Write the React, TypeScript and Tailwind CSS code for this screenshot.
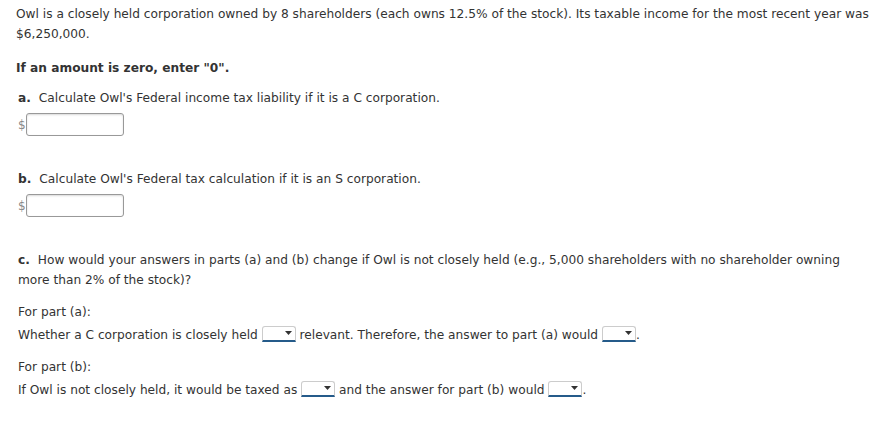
import React from "react";

function Money() {
  return (
    <div className="mt-[5px] flex items-center text-[#888]">
      <span className="text-[12px]">$</span>
      <div className="h-[23px] w-[98px] rounded-[3px] border border-[#999] bg-white shadow-[inset_0_1px_2px_rgba(0,0,0,0.15)]" />
    </div>
  );
}

function Pick() {
  return (
    <span className="relative inline-block h-[16px] w-[34px] translate-y-[3px] rounded-t-[3px] border border-b-2 border-[#ccc] border-b-[#255b8a] bg-white align-baseline">
      <svg
        className="absolute right-[3px] top-[4px]"
        width="7"
        height="4"
        viewBox="0 0 7 4"
      >
        <path d="M0 0H7L3.5 4Z" fill="#333" />
      </svg>
    </span>
  );
}

export default function App() {
  return (
    <div
      className="bg-white px-4 pt-[4px] text-[12.2px] leading-[20px] text-[#333]"
      style={{ fontFamily: '"DejaVu Sans", Verdana, sans-serif' }}
    >
      <p>
        Owl is a closely held corporation owned by 8 shareholders (each owns
        12.5% of the stock). Its taxable income for the most recent year was
        $6,250,000.
      </p>
      <p className="mt-[14px] font-bold">If an amount is zero, enter "0".</p>

      <div className="mt-[10px] pl-[2px]">
        <p>
          <b className="mr-[8px]">a.</b>Calculate Owl's Federal income tax
          liability if it is a C corporation.
        </p>
        <Money />
      </div>

      <div className="mt-[33px] pl-[2px]">
        <p>
          <b className="mr-[8px]">b.</b>Calculate Owl's Federal tax calculation
          if it is an S corporation.
        </p>
        <Money />
      </div>

      <div className="mt-[33px] pl-[2px]">
        <p>
          <b className="mr-[8px]">c.</b>How would your answers in parts (a) and
          (b) change if Owl is not closely held (e.g., 5,000 shareholders with
          no shareholder owning more than 2% of the stock)?
        </p>
        <p className="mt-[12px]">For part (a):</p>
        <p className="mt-[1px]">
          Whether a C corporation is closely held <Pick /> relevant. Therefore,
          the answer to part (a) would <Pick />.
        </p>
        <p className="mt-[12px]">For part (b):</p>
        <p className="mt-[1px]">
          If Owl is not closely held, it would be taxed as <Pick /> and the
          answer for part (b) would <Pick />.
        </p>
      </div>
    </div>
  );
}
